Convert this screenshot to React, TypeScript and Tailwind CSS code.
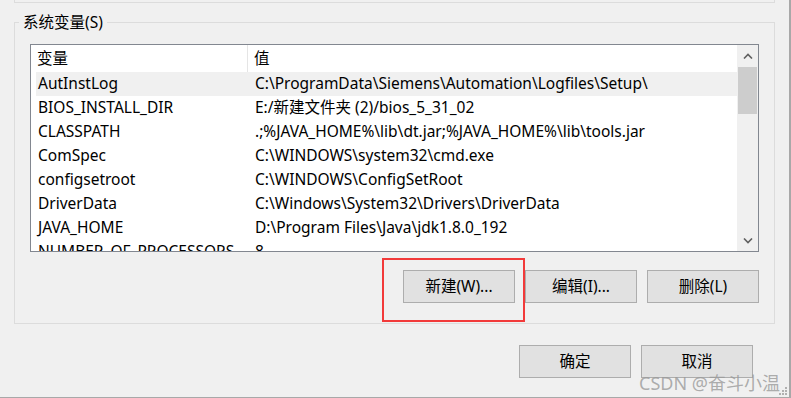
import React from 'react';

const rows: [string, string][] = [
  ['AutInstLog', 'C:\\ProgramData\\Siemens\\Automation\\Logfiles\\Setup\\'],
  ['BIOS_INSTALL_DIR', 'E:/新建文件夹 (2)/bios_5_31_02'],
  ['CLASSPATH', '.;%JAVA_HOME%\\lib\\dt.jar;%JAVA_HOME%\\lib\\tools.jar'],
  ['ComSpec', 'C:\\WINDOWS\\system32\\cmd.exe'],
  ['configsetroot', 'C:\\WINDOWS\\ConfigSetRoot'],
  ['DriverData', 'C:\\Windows\\System32\\Drivers\\DriverData'],
  ['JAVA_HOME', 'D:\\Program Files\\Java\\jdk1.8.0_192'],
  ['NUMBER_OF_PROCESSORS', '8'],
];

const font = { fontFamily: '"Noto Sans", "Noto Sans CJK SC", sans-serif' };

const Btn = ({ label }: { label: string }) => (
  <button className="w-[112px] h-[33px] border border-[#adadad] bg-[#e1e1e1] text-[15.5px] text-black flex items-center justify-center">
    {label}
  </button>
);

export default function App() {
  return (
    <div
      className="relative w-[791px] h-[398px] bg-[#f0f0f0] overflow-hidden border-r-2 border-b border-[#a8a8a8] text-black"
      style={font}
    >
      {/* bottom edge of the group above */}
      <div className="ml-[14px] w-[761px] h-[3px] border-l border-r border-b border-[#dcdcdc]" />

      {/* 系统变量 group */}
      <div className="relative ml-[14px] mt-[19px] w-[761px] h-[302px] border border-[#dcdcdc] pl-[15px] pt-[21px]">
        <span className="absolute -top-[12px] left-[4px] bg-[#f0f0f0] px-[4px] text-[15.5px] leading-[22px]">
          系统变量(S)
        </span>

        <div className="w-[729px] h-[208px] border border-[#828790] bg-white flex">
          <div className="flex-1 pl-[5px] overflow-hidden">
            <div className="flex h-[27px] items-center text-[15.5px]">
              <div className="w-[212px] h-full flex items-center pl-[1px] border-r border-[#e5e5e5]">变量</div>
              <div className="pl-[6px]">值</div>
            </div>
            {rows.map(([k, v], i) => (
              <div
                key={k}
                className={`flex h-[24px] items-center text-[15.5px] whitespace-nowrap ${i === 0 ? 'bg-[#f0f0f0]' : ''}`}
              >
                <div className="w-[212px] pl-[2px]">{k}</div>
                <div className="pl-[7px]">{v}</div>
              </div>
            ))}
          </div>

          {/* scrollbar */}
          <div className="w-[21px] bg-[#f0f0f0] flex flex-col">
            <div className="h-[21px] flex items-center justify-center">
              <svg width="10" height="6" viewBox="0 0 10 6">
                <path d="M1 5.5 L5 1.5 L9 5.5" fill="none" stroke="#606060" strokeWidth="1.6" />
              </svg>
            </div>
            <div className="h-[47px] mt-[1px] mx-[1px] bg-[#cdcdcd]" />
            <div className="flex-1" />
            <div className="h-[21px] flex items-center justify-center">
              <svg width="10" height="6" viewBox="0 0 10 6">
                <path d="M1 0.5 L5 4.5 L9 0.5" fill="none" stroke="#606060" strokeWidth="1.6" />
              </svg>
            </div>
          </div>
        </div>

        <div className="flex justify-end gap-[10px] mt-[18px] w-[729px]">
          <Btn label="新建(W)..." />
          <Btn label="编辑(I)..." />
          <Btn label="删除(L)" />
        </div>
      </div>

      {/* dialog buttons */}
      <div className="flex gap-[10px] ml-[519px] mt-[21px]">
        <Btn label="确定" />
        <Btn label="取消" />
      </div>

      {/* red highlight around 新建 */}
      <div className="absolute left-[382px] top-[258px] w-[143px] h-[64px] border-2 border-[#f23a3a]" />

      {/* watermark */}
      <div className="absolute left-[639px] top-[370px] text-[18px] text-[#9a9a9a]/80 whitespace-nowrap">
        CSDN @奋斗小温
      </div>

      {/* size grip */}
      <div className="absolute right-[2px] bottom-[2px] grid grid-cols-3 gap-[1px]">
        {[0, 0, 1, 0, 1, 1, 1, 1, 1].map((on, i) => (
          <div key={i} className={`w-[2px] h-[2px] ${on ? 'bg-[#b0b0b0]' : ''}`} />
        ))}
      </div>
    </div>
  );
}
